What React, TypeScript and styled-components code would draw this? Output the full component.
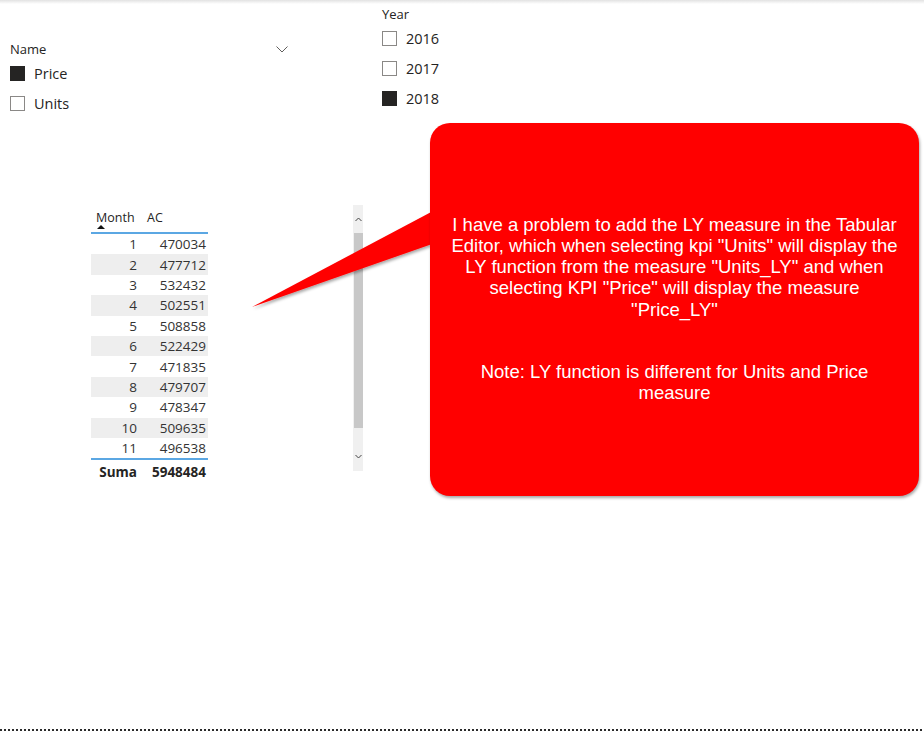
import styled, { createGlobalStyle } from 'styled-components';

const GlobalStyle = createGlobalStyle`
  * { box-sizing: border-box; }
  html, body { margin: 0; padding: 0; background: #ffffff; }
  body { font-family: "Open Sans", "Noto Sans", sans-serif; color: #252423; }
`;

const months = [
  { m: 1, ac: 470034 },
  { m: 2, ac: 477712 },
  { m: 3, ac: 532432 },
  { m: 4, ac: 502551 },
  { m: 5, ac: 508858 },
  { m: 6, ac: 522429 },
  { m: 7, ac: 471835 },
  { m: 8, ac: 479707 },
  { m: 9, ac: 478347 },
  { m: 10, ac: 509635 },
  { m: 11, ac: 496538 },
];

const Checkbox = ({ checked }: { checked?: boolean }) => <SBox $checked={checked} />;

const App = () => {
  return (
    <SPage>
      <GlobalStyle />
      <STopShadow />

      <STopRow>
        {/* Name slicer */}
        <SNameSlicer>
          <SSlicerHeader>
            <span>Name</span>
            <svg width="12" height="7" viewBox="0 0 12 7">
              <path d="M0.5 0.5 L6 6 L11.5 0.5" fill="none" stroke="#605e5c" strokeWidth="1" />
            </svg>
          </SSlicerHeader>
          <SSlicerItem>
            <Checkbox checked />
            Price
          </SSlicerItem>
          <SSlicerItem>
            <Checkbox />
            Units
          </SSlicerItem>
        </SNameSlicer>

        {/* Year slicer */}
        <SYearSlicer>
          <SSlicerHeader>
            <span>Year</span>
          </SSlicerHeader>
          <SSlicerItem>
            <Checkbox />
            2016
          </SSlicerItem>
          <SSlicerItem>
            <Checkbox />
            2017
          </SSlicerItem>
          <SSlicerItem>
            <Checkbox checked />
            2018
          </SSlicerItem>
        </SYearSlicer>
      </STopRow>

      {/* Table visual */}
      <STableVisual>
        <STable>
          <STableHeader>
            <div className="month">
              Month
              <span className="sort" />
            </div>
            <div className="ac">AC</div>
          </STableHeader>
          {months.map((row) => (
            <STableRow key={row.m} $shaded={row.m % 2 === 0}>
              <div className="month">{row.m}</div>
              <div className="ac">{row.ac}</div>
            </STableRow>
          ))}
          <STotalRow>
            <div className="month">Suma</div>
            <div className="ac">5948484</div>
          </STotalRow>
        </STable>

        <SScrollbar>
          <SScrollArrow $h={28}>
            <svg width="7" height="5" viewBox="0 0 7 5">
              <path d="M0.5 4 L3.5 1 L6.5 4" fill="none" stroke="#444" strokeWidth="1" />
            </svg>
          </SScrollArrow>
          <div className="thumb" />
          <SScrollArrow $h={43}>
            <svg width="7" height="5" viewBox="0 0 7 5">
              <path d="M0.5 1 L3.5 4 L6.5 1" fill="none" stroke="#444" strokeWidth="1" />
            </svg>
          </SScrollArrow>
        </SScrollbar>
      </STableVisual>

      <SDotted />

      {/* Callout */}
      <STail width="200" height="120" viewBox="0 0 200 120">
        <defs>
          <filter id="tailShadow" x="-10%" y="-20%" width="130%" height="150%">
            <feDropShadow dx="1" dy="2" stdDeviation="1.4" floodColor="#000" floodOpacity="0.35" />
          </filter>
        </defs>
        <polygon points="195,10 195,43 12,107" fill="#ff0000" filter="url(#tailShadow)" />
      </STail>
      <SCallout>
        <p>
          I have a problem to add the LY measure in the Tabular
          <br />
          Editor, which when selecting kpi "Units" will display the
          <br />
          LY function from the measure "Units_LY" and when
          <br />
          selecting KPI "Price" will display the measure
          <br />
          "Price_LY"
        </p>
        <p className="note">
          Note: LY function is different for Units and Price
          <br />
          measure
        </p>
      </SCallout>
    </SPage>
  );
};

export default App;

const SPage = styled.div`
  position: relative;
  width: 924px;
  height: 750px;
  overflow: hidden;
  background: #ffffff;
`;

const STopShadow = styled.div`
  height: 4px;
  background: linear-gradient(to bottom, #e2e2e2, #ffffff);
`;

const STopRow = styled.div`
  display: flex;
  align-items: flex-start;
  padding-left: 10px;
  height: 201px;
`;

const SNameSlicer = styled.div`
  width: 282px;
  margin-top: 36px;
`;

const SYearSlicer = styled.div`
  width: 120px;
  margin-left: 90px;
  margin-top: 1px;
`;

const SSlicerHeader = styled.div`
  height: 18px;
  display: flex;
  align-items: center;
  justify-content: space-between;
  font-size: 13px;
  color: #252423;

  svg {
    margin-right: 4px;
  }
`;

const SSlicerItem = styled.div`
  height: 30px;
  display: flex;
  align-items: center;
  gap: 9px;
  font-size: 14.5px;
  color: #252423;
`;

const SBox = styled.span<{ $checked?: boolean }>`
  width: 15px;
  height: 15px;
  flex-shrink: 0;
  border: 1px solid ${(p) => (p.$checked ? '#252423' : '#8a8886')};
  background: ${(p) => (p.$checked ? '#252423' : '#ffffff')};
`;

const STableVisual = styled.div`
  display: flex;
  align-items: flex-start;
  margin-left: 91px;
`;

const STable = styled.div`
  width: 117px;
  font-size: 13.5px;
  color: #333333;

  .month {
    text-align: right;
    padding-right: 4px;
  }

  .ac {
    text-align: right;
    padding-right: 2px;
  }
`;

const STableHeader = styled.div`
  display: grid;
  grid-template-columns: 50px 67px;
  height: 29px;
  border-bottom: 2px solid #5ba7e3;
  font-size: 12.5px;
  color: #252423;

  .month {
    position: relative;
    text-align: left;
    padding-left: 5px;
    padding-top: 4px;
  }

  .ac {
    text-align: left;
    padding-left: 6px;
    padding-top: 4px;
  }

  .sort {
    position: absolute;
    left: 6px;
    top: 20px;
    width: 0;
    height: 0;
    border-left: 4px solid transparent;
    border-right: 4px solid transparent;
    border-bottom: 4px solid #111111;
  }
`;

const STableRow = styled.div<{ $shaded?: boolean }>`
  display: grid;
  grid-template-columns: 50px 67px;
  height: 20.4px;
  align-items: center;
  background: ${(p) => (p.$shaded ? '#eeeeee' : 'transparent')};
`;

const STotalRow = styled.div`
  display: grid;
  grid-template-columns: 50px 67px;
  height: 26px;
  align-items: center;
  border-top: 2px solid #5ba7e3;
  font-weight: 700;
  color: #252423;
`;

const SScrollbar = styled.div`
  width: 10px;
  height: 266px;
  margin-left: 145px;
  background: #f0f0f0;
  display: flex;
  flex-direction: column;
  align-items: center;

  .thumb {
    width: 9px;
    flex: 1;
    background: #c8c8c8;
  }
`;

const SScrollArrow = styled.div<{ $h: number }>`
  height: ${(p) => p.$h}px;
  display: flex;
  align-items: ${(p) => (p.$h > 30 ? 'flex-end' : 'center')};
  padding-bottom: ${(p) => (p.$h > 30 ? '12px' : '0')};
`;

const SDotted = styled.div`
  position: absolute;
  left: 0;
  right: 0;
  top: 729px;
  height: 2px;
  background: repeating-linear-gradient(to right, #2b2b2b 0 2px, transparent 2px 4px);
`;

const STail = styled.svg`
  position: absolute;
  left: 240px;
  top: 200px;
  overflow: visible;
`;

const SCallout = styled.div`
  position: absolute;
  left: 430px;
  top: 123px;
  width: 489px;
  height: 373px;
  background: #ff0000;
  border-radius: 20px;
  box-shadow: 1px 2px 3px rgba(0, 0, 0, 0.35);
  display: flex;
  flex-direction: column;
  justify-content: center;
  align-items: center;
  padding: 0 6px 2px;
  color: #ffffff;
  font-family: "Liberation Sans", Arial, sans-serif;
  font-size: 18.5px;
  line-height: 21.25px;
  text-align: center;
  white-space: nowrap;

  p {
    margin: 0;
  }

  .note {
    margin-top: 41px;
  }
`;
